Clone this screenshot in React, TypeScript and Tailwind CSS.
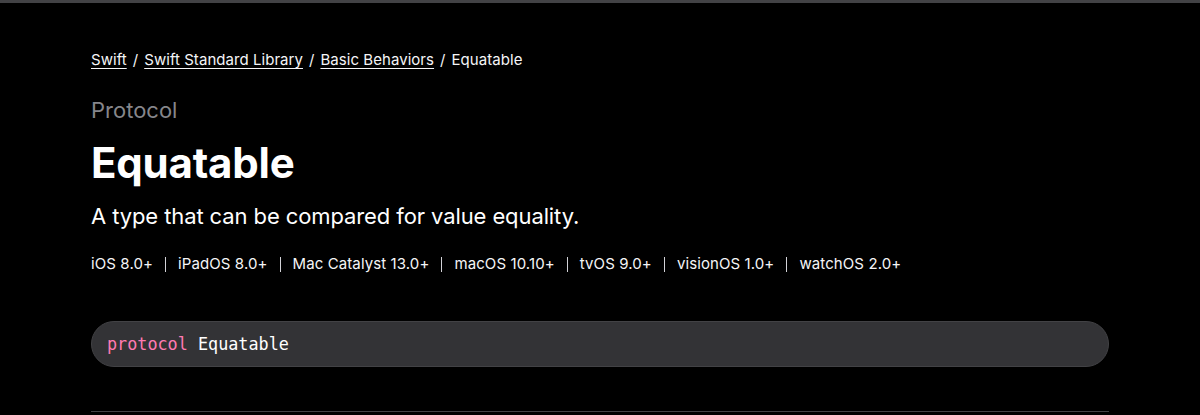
const platforms = [
  "iOS 8.0+",
  "iPadOS 8.0+",
  "Mac Catalyst 13.0+",
  "macOS 10.10+",
  "tvOS 9.0+",
  "visionOS 1.0+",
  "watchOS 2.0+",
];

const crumbs = ["Swift", "Swift Standard Library", "Basic Behaviors"];

export default function App() {
  return (
    <div className="min-h-[415px] bg-black text-[#f5f5f7] font-['Inter',sans-serif] antialiased">
      <div className="h-[4px] border-t-[3px] border-[#424245]" />
      <main className="mx-auto w-[1018px] pt-[46px]">
        <nav className="flex items-center text-[15px] leading-[20px] tracking-[0.05px]">
          {crumbs.map((c) => (
            <span key={c} className="flex items-center">
              <a href="#" className="underline underline-offset-[3px] decoration-1">
                {c}
              </a>
              <span className="px-[6px]">/</span>
            </span>
          ))}
          <span>Equatable</span>
        </nav>

        <p className="mt-[26px] text-[22px] leading-[28px] text-[#86868b] tracking-[0px]">Protocol</p>

        <h1 className="mt-[14px] text-[42px] leading-[50px] font-bold tracking-[-0.2px] text-white">Equatable</h1>

        <p className="mt-[13px] text-[22px] leading-[30px] tracking-[-0.1px] text-white">
          A type that can be compared for value equality.
        </p>

        <ul className="mt-[23px] flex items-center text-[15px] leading-[20px] tracking-[0.1px]">
          {platforms.map((p, i) => (
            <li key={p} className="flex items-center">
              {i > 0 && <span className="mx-[12px] h-[15px] w-px bg-[#d2d2d7]" />}
              {p}
            </li>
          ))}
        </ul>

        <div className="mt-[47px] flex h-[46px] items-center rounded-full border border-[#424245] bg-[#333336] px-[15px]">
          <code className="font-['DejaVu_Sans_Mono',monospace] text-[16.8px] leading-[22px] tracking-[0px]">
            <span className="text-[#ff7ab2]">protocol</span> <span className="text-white">Equatable</span>
          </code>
        </div>

        <div className="mt-[44px] h-px bg-[#424245]" />
      </main>
    </div>
  );
}
